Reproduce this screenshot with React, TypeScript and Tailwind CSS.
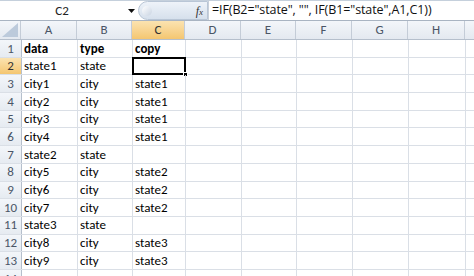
import React from "react";

const cols = ["A", "B", "C", "D", "E", "F", "G", "H", ""];
const widths = [56, 55, 53, 56, 55, 56, 56, 57, 40];

const data: [string, string, string][] = [
  ["data", "type", "copy"],
  ["state1", "state", ""],
  ["city1", "city", "state1"],
  ["city2", "city", "state1"],
  ["city3", "city", "state1"],
  ["city4", "city", "state1"],
  ["state2", "state", ""],
  ["city5", "city", "state2"],
  ["city6", "city", "state2"],
  ["city7", "city", "state2"],
  ["state3", "state", ""],
  ["city8", "city", "state3"],
  ["city9", "city", "state3"],
  ["", "", ""],
];

const font = { fontFamily: "Carlito, Calibri, Lato, 'Liberation Sans', sans-serif" };

export default function App() {
  return (
    <div className="w-[474px] h-[276px] overflow-hidden bg-white relative" style={font}>
      {/* formula bar */}
      <div className="flex h-[21px] border-t border-[#c5d0dc] border-b border-b-[#a9b4c2] bg-white items-center">
        <div className="w-[124px] h-full flex items-center justify-center text-[13px] text-[#222]">C2</div>
        <div className="w-[14px] h-full flex items-center justify-center">
          <svg width="7" height="4" viewBox="0 0 7 4"><path d="M0 0h7L3.5 4z" fill="#111" /></svg>
        </div>
        <div className="relative w-[70px] h-[19px] rounded-l-full bg-gradient-to-b from-[#eef3f9] to-[#d6e0ec] border border-[#b9c6d6] flex items-center">
          <div className="ml-[3px] w-[10px] h-[10px] rounded-full bg-gradient-to-br from-white to-[#c9d4e2]" />
          <span className="ml-auto mr-[4px] text-[12px] italic text-[#333]" style={{ fontFamily: "'Liberation Serif', serif" }}>f<span className="text-[9px]">x</span></span>
        </div>
        <div className="w-px h-full bg-[#c8d0da]" />
        <div className="pl-[3px] text-[#111] whitespace-nowrap" style={{ fontFamily: "'Open Sans', sans-serif", fontSize: "12.5px", letterSpacing: "-0.1px" }}>
          =IF(B2="state", "", IF(B1="state",A1,C1))
        </div>
      </div>

      {/* column header */}
      <div className="flex h-[19px] bg-gradient-to-b from-[#f3f6fa] to-[#e4e9f0] border-b border-[#b5bfcc]">
        <div className="w-[22px] h-full border-r border-[#c4ccd7] relative flex items-end justify-end p-[2px]">
          <svg width="16" height="14" viewBox="0 0 16 14"><path d="M16 0v14H0z" fill="#bccadb" /></svg>
        </div>
        {cols.map((c, i) => (
          <div
            key={i}
            className={`h-full flex items-center justify-center text-[13px] border-r border-[#c4ccd7] shrink-0 ${
              c === "C" ? "bg-gradient-to-b from-[#fbe3b0] to-[#f4c670] text-[#333]" : "text-[#4a5566]"
            }`}
            style={{ width: widths[i] }}
          >
            {c}
          </div>
        ))}
      </div>

      {/* rows */}
      {data.map((r, ri) => (
        <div key={ri} className="flex h-[17.7px] border-b border-[#dadfe6]">
          <div
            className={`w-[22px] shrink-0 h-full flex items-center justify-center text-[13px] border-r border-[#b5bfcc] ${
              ri === 1 ? "bg-gradient-to-b from-[#fbe3b0] to-[#f4c670] text-[#333]" : "bg-gradient-to-b from-[#f3f6fa] to-[#e6ebf1] text-[#4a5566]"
            }`}
          >
            {ri + 1}
          </div>
          {widths.map((w, ci) => (
            <div
              key={ci}
              className={`relative shrink-0 h-full flex items-center pl-[2px] text-[13px] text-black border-r border-[#dadfe6] ${
                ri === 0 ? "font-bold" : ""
              }`}
              style={{ width: w }}
            >
              {ci < 3 ? r[ci] : ""}
              {ri === 1 && ci === 2 && (
                <div className="absolute -left-px -top-px -right-px -bottom-px border-2 border-black">
                  <div className="absolute -right-[4px] -bottom-[4px] w-[5px] h-[5px] bg-black border border-white" />
                </div>
              )}
            </div>
          ))}
        </div>
      ))}
    </div>
  );
}
